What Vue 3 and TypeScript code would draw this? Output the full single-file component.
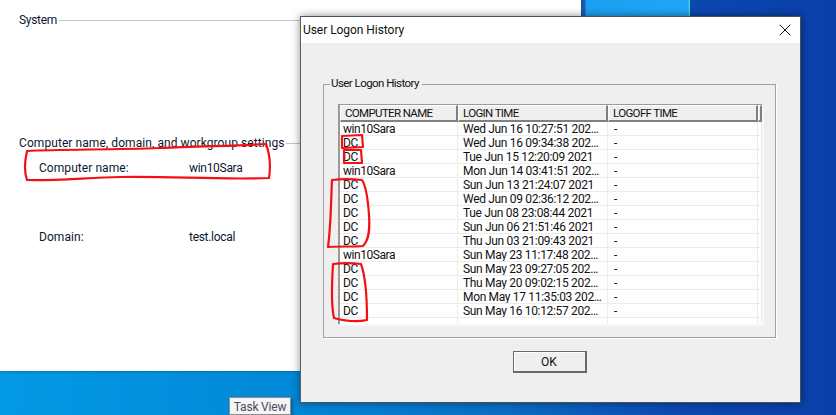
<script setup lang="ts">
interface Row { name: string; login: string }
const rows: Row[] = [
  { name: 'win10Sara', login: 'Wed Jun 16 10:27:51 202…' },
  { name: 'DC', login: 'Wed Jun 16 09:34:38 202…' },
  { name: 'DC', login: 'Tue Jun 15 12:20:09 2021' },
  { name: 'win10Sara', login: 'Mon Jun 14 03:41:51 202…' },
  { name: 'DC', login: 'Sun Jun 13 21:24:07 2021' },
  { name: 'DC', login: 'Wed Jun 09 02:36:12 202…' },
  { name: 'DC', login: 'Tue Jun 08 23:08:44 2021' },
  { name: 'DC', login: 'Sun Jun 06 21:51:46 2021' },
  { name: 'DC', login: 'Thu Jun 03 21:09:43 2021' },
  { name: 'win10Sara', login: 'Sun May 23 11:17:48 202…' },
  { name: 'DC', login: 'Sun May 23 09:27:05 202…' },
  { name: 'DC', login: 'Thu May 20 09:02:15 202…' },
  { name: 'DC', login: 'Mon May 17 11:35:03 202…' },
  { name: 'DC', login: 'Sun May 16 10:12:57 202…' },
]
</script>

<template>
  <div class="desktop">
    <section class="sys-window">
      <div class="sys-head"><span>System</span><i class="rule"></i></div>
      <div class="sys-section"><span>Computer name, domain, and workgroup settings</span><i class="rule"></i></div>
      <div class="sys-row first"><span class="k">Computer name:</span><span class="v">win10Sara</span></div>
      <div class="sys-row second"><span class="k">Domain:</span><span class="v">test.local</span></div>
    </section>

    <div class="tooltip">Task View</div>

    <section class="dialog">
      <header class="titlebar">
        <span>User Logon History</span>
        <svg class="close" width="12" height="12" viewBox="0 0 12 12">
          <path d="M.7.7l10.6 10.6M11.3.7L.7 11.3" stroke="#111" stroke-width="1" fill="none" />
        </svg>
      </header>
      <div class="body">
        <fieldset class="group">
          <legend>User Logon History</legend>
          <div class="list">
            <div class="hdr">
              <div class="hcell c1">COMPUTER NAME</div>
              <div class="hcell c2">LOGIN TIME</div>
              <div class="hcell c3">LOGOFF TIME</div>
              <div class="hcell c4"></div>
            </div>
            <div v-for="(r, i) in rows" :key="i" class="row">
              <div class="cell c1">{{ r.name }}</div>
              <div class="cell c2">{{ r.login }}</div>
              <div class="cell c3">-</div>
              <div class="cell c4"></div>
            </div>
            <div class="row tail">
              <div class="cell c1"></div><div class="cell c2"></div><div class="cell c3"></div><div class="cell c4"></div>
            </div>
          </div>
        </fieldset>
        <div class="actions"><button class="ok" type="button">OK</button></div>
      </div>
    </section>

    <svg class="ink" width="836" height="415" viewBox="0 0 836 415" fill="none" stroke="#f40f14" stroke-linecap="round" stroke-linejoin="round">
      <path stroke-width="2.2" d="M27 151 C60 149 110 150 160 148 C200 146 240 146 266 144 C269 152 271 165 269 178 C220 180 170 176 120 177 C85 178 50 181 27 180 C24 172 25 160 27 151 Z" />
      <path stroke-width="2.2" d="M342 136 L362 135 L363 147 L342 148 Z" />
      <path stroke-width="2.2" d="M344 150 L361 150 L362 163 L344 163 Z" />
      <path stroke-width="2.2" d="M332 180 C340 179 352 179 362 180 C366 186 368 200 369 215 C370 230 369 240 363 246 C352 247 340 246 328 247 C331 225 331 200 332 180 Z" />
      <path stroke-width="2.2" d="M333 264 C342 263 352 263 361 264 C365 275 367 295 367 320 C358 322 345 321 334 318 C331 305 332 280 333 264 Z" />
    </svg>
  </div>
</template>

<style>
html, body { margin: 0; background: #0a5cc0; }
</style>

<style scoped>
.desktop {
  position: relative;
  width: 836px;
  height: 415px;
  overflow: hidden;
  font: 12px/14px Roboto, "Liberation Sans", sans-serif;
  color: #111;
  background:
    linear-gradient(90deg, #1a5fb0 0, #1a5fb0 5px, #1c9ff0 6px, #1fa6f4 108px, #36d2e6 109px, #36d2e6 110px) 580px 0 / 110px 40px no-repeat,
    linear-gradient(90deg, #0399e4 0%, #0288d8 35%, #0a6ec4 60%, #0b48b0 82%, #0a3fa8 100%);
}
.sys-window {
  position: absolute;
  left: 0;
  top: 0;
  width: 581px;
  height: 371px;
  background: #fff;
  box-shadow: 0 0 3px rgba(0, 40, 90, .5);
  color: #0b1830;
}
.rule { flex: 1; height: 1px; background: #c4c4c4; margin-left: 2px; }
.sys-head, .sys-section { display: flex; align-items: center; padding-left: 19px; white-space: nowrap; }
.sys-head { padding-top: 13px; }
.sys-head span { letter-spacing: -.3px; }
.sys-section { padding-top: 109px; }
.sys-section span { letter-spacing: .07px; }
.sys-row { display: flex; padding-left: 39px; }
.sys-row.first { margin-top: 11px; }
.sys-row.second { margin-top: 55px; }
.k { width: 150px; letter-spacing: .06px; }
.v { letter-spacing: -.3px; }

.tooltip {
  position: absolute;
  left: 229px;
  top: 397px;
  width: 62px;
  height: 18px;
  box-sizing: border-box;
  border: 1px solid #8c8c8c;
  background: #f5f5f5;
  color: #4a4a60;
  text-align: center;
  line-height: 18px;
  letter-spacing: -.2px;
  box-shadow: 2px 2px 3px rgba(0, 0, 0, .25);
}

.dialog {
  position: absolute;
  left: 300px;
  top: 16px;
  width: 501px;
  height: 387px;
  box-sizing: border-box;
  border: 1px solid #4a5058;
  border-left-color: #59606a;
  background: #efefef;
  box-shadow: 0 0 8px rgba(0, 0, 0, .45);
  display: flex;
  flex-direction: column;
}
.titlebar {
  height: 26px;
  flex: none;
  background: #fff;
  display: flex;
  align-items: center;
  justify-content: space-between;
  padding: 0 9px 0 2px;
  letter-spacing: -.05px;
}
.body { flex: 1; padding: 34px 24px 0 22px; display: flex; flex-direction: column; }
.group {
  margin: 0;
  padding: 0 14px 0 14px;
  border: 1px solid #a0a0a0;
  box-shadow: 1px 1px 0 #fff;
  height: 261px;
  min-width: 0;
  box-sizing: border-box;
  flex: none;
}
.group legend {
  padding: 0 3px 0 1px;
  margin-left: -8px;
  line-height: 13px;
  height: 14px;
  font-size: 11.5px;
  letter-spacing: -.55px;
}
.list {
  margin-top: 13px;
  width: 424px;
  height: 220px;
  background: #fff;
  box-sizing: border-box;
  border-left: 2px solid #9a9a9a;
  border-top: 1px solid #9a9a9a;
  overflow: hidden;
  box-shadow: 2px 2px 0 #f7f7f7;
}
.hdr { display: flex; height: 17px; background: #efefef; }
.hcell {
  box-sizing: border-box;
  border: 1px solid;
  border-color: #fff #808080 #808080 #fff;
  border-right-width: 2px;
  border-bottom-width: 2px;
  padding-left: 4px;
  line-height: 15px;
  font-size: 11.5px;
  letter-spacing: -.65px;
  white-space: nowrap;
}
.row { display: flex; height: 14px; border-bottom: 1px solid #ececec; box-sizing: border-box; }
.row.tail { height: 5px; border-bottom: 0; }
.cell {
  box-sizing: border-box;
  border-right: 1px solid #ececec;
  padding-left: 3px;
  line-height: 15px;
  letter-spacing: -.12px;
  white-space: nowrap;
  overflow: hidden;
}
.cell.c1 { letter-spacing: -.45px; }
.cell.c2 { padding-left: 5px; letter-spacing: -.33px; }
.cell.c3 { padding-left: 6px; }
.c1 { width: 118px; }
.c2 { width: 150px; }
.c3 { width: 150px; }
.c4 { width: 4px; padding: 0; }
.actions { display: flex; justify-content: center; padding-top: 13px; }
.ok {
  width: 74px;
  height: 22px;
  box-sizing: border-box;
  font: inherit;
  color: #111;
  background: #efefef;
  border: 1px solid #6a6a6a;
  border-right-width: 2px;
  border-bottom-width: 2px;
  box-shadow: inset 1px 1px 0 #fff;
  padding: 0;
}
.ink { position: absolute; left: 0; top: 0; pointer-events: none; }
</style>
